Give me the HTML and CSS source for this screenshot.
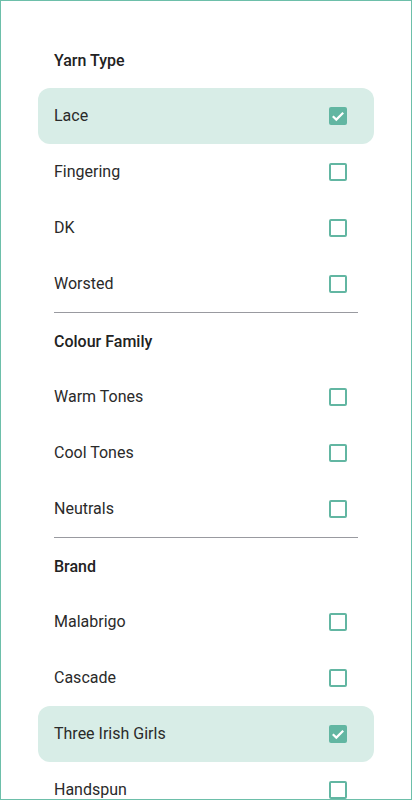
FILE: index.html
```html
<!DOCTYPE html>
<html>
<head>
<meta charset="utf-8">
<link rel="stylesheet" href="styles.css">
</head>
<body>
<div class="frame">
  <div class="list">
    <div class="section">
      <div class="header">Yarn Type</div>
      <div class="row selected"><span class="label">Lace</span><span class="box checked"><svg viewBox="0 0 18 18"><path d="M3.8 9.2 L7.3 12.6 L14.2 5.7" fill="none" stroke="#fff" stroke-width="2.2"/></svg></span></div>
      <div class="row"><span class="label">Fingering</span><span class="box"></span></div>
      <div class="row"><span class="label">DK</span><span class="box"></span></div>
      <div class="row"><span class="label">Worsted</span><span class="box"></span></div>
    </div>
    <div class="divider"></div>
    <div class="section">
      <div class="header">Colour Family</div>
      <div class="row"><span class="label">Warm Tones</span><span class="box"></span></div>
      <div class="row"><span class="label">Cool Tones</span><span class="box"></span></div>
      <div class="row"><span class="label">Neutrals</span><span class="box"></span></div>
    </div>
    <div class="divider"></div>
    <div class="section">
      <div class="header">Brand</div>
      <div class="row"><span class="label">Malabrigo</span><span class="box"></span></div>
      <div class="row"><span class="label">Cascade</span><span class="box"></span></div>
      <div class="row selected"><span class="label">Three Irish Girls</span><span class="box checked"><svg viewBox="0 0 18 18"><path d="M3.8 9.2 L7.3 12.6 L14.2 5.7" fill="none" stroke="#fff" stroke-width="2.2"/></svg></span></div>
      <div class="row"><span class="label">Handspun</span><span class="box"></span></div>
    </div>
  </div>
</div>
</body>
</html>
```
FILE: styles.css
```css
* { box-sizing: border-box; }
html, body { margin: 0; padding: 0; }
body {
  font-family: Roboto, "Noto Sans", sans-serif;
  background: #fff;
  color: #1f1f1f;
}
.frame {
  width: 412px;
  height: 800px;
  border: 1px solid #6dbfaa;
  overflow: hidden;
  padding: 31px 37px 0 37px;
}
.list {
  display: flex;
  flex-direction: column;
}
.section {
  display: flex;
  flex-direction: column;
}
.header {
  height: 56px;
  display: flex;
  align-items: center;
  padding-left: 16px;
  font-size: 16px;
  font-weight: 500;
  color: #222;
}
.row {
  height: 56px;
  display: flex;
  align-items: center;
  justify-content: space-between;
  padding: 0 27px 1px 16px;
  border-radius: 12px;
  font-size: 16px;
  color: #2a2a2a;
}
.row .box {
  margin-top: 1px;
}
.row.selected {
  background: #d8ede7;
}
.box {
  width: 18px;
  height: 18px;
  border: 2px solid #62b6a2;
  border-radius: 2px;
  display: flex;
}
.box.checked {
  background: #62b6a2;
  border: none;
}
.box svg {
  width: 18px;
  height: 18px;
}
.divider {
  height: 1px;
  background: #999aa0;
  margin: 0 16px;
}
```
